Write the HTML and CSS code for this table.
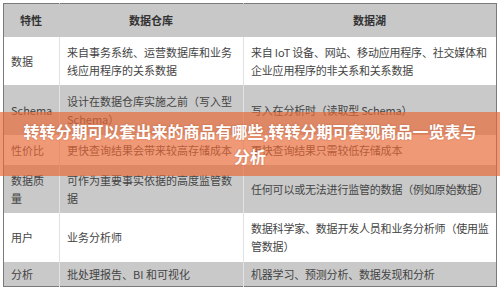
FILE: index.html
```html
<!DOCTYPE html>
<html lang="zh-CN">
<head>
<meta charset="utf-8">
<title>数据仓库 vs 数据湖</title>
<link rel="stylesheet" href="styles.css">
</head>
<body>
<div class="page">
  <table class="cmp">
    <colgroup>
      <col class="c1"><col class="c2"><col class="c3">
    </colgroup>
    <thead>
      <tr class="row-head"><th>特性</th><th>数据仓库</th><th>数据湖</th></tr>
    </thead>
    <tbody>
      <tr class="r-white h48"><td>数据</td><td>来自事务系统、运营数据库和业务线应用程序的关系数据</td><td>来自 IoT 设备、网站、移动应用程序、社交媒体和企业应用程序的非关系和关系数据</td></tr>
      <tr class="r-gray h50"><td>Schema</td><td>设计在数据仓库实施之前（写入型 Schema）</td><td>写入在分析时（读取型 Schema）</td></tr>
      <tr class="r-white h30"><td>性价比</td><td>更快查询结果会带来较高存储成本</td><td>更快查询结果只需较低存储成本</td></tr>
      <tr class="r-gray h48"><td>数据质量</td><td>可作为重要事实依据的高度监管数据</td><td>任何可以或无法进行监管的数据（例如原始数据）</td></tr>
      <tr class="r-white h49"><td>用户</td><td>业务分析师</td><td>数据科学家、数据开发人员和业务分析师（使用监管数据）</td></tr>
      <tr class="r-gray h25"><td>分析</td><td>批处理报告、BI 和可视化</td><td>机器学习、预测分析、数据发现和分析</td></tr>
    </tbody>
  </table>
  <div class="banner">转转分期可以套出来的商品有哪些,转转分期可套现商品一览表与分析</div>
</div>
</body>
</html>
```

FILE: styles.css
```css
html, body {
  margin: 0;
  padding: 0;
  background: #ffffff;
}

.page {
  position: relative;
  width: 500px;
  height: 295px;
  padding: 3px 0 0 3px;
  box-sizing: border-box;
  font-family: "Noto Sans CJK SC", "Noto Sans", sans-serif;
  overflow: hidden;
}

.cmp {
  table-layout: fixed;
  border-collapse: collapse;
  width: 494px;
  border: 1px solid #7a7a7a;
  font-size: 11px;
  line-height: 18px;
  color: #444;
}

.c1 { width: 56px; }
.c2 { width: 184px; }
.c3 { width: 253px; }

.cmp th,
.cmp td {
  padding: 0 8px 0 7px;
  vertical-align: middle;
  border-left: 1px solid #e2e2e2;
  text-align: left;
}

.cmp td:last-child {
  padding-right: 1px;
  letter-spacing: -0.2px;
}

.cmp th:first-child,
.cmp td:first-child {
  border-left: none;
}

.row-head {
  height: 33px;
  background: #c8c8c8;
}

.cmp th {
  text-align: center;
  font-weight: 700;
  color: #333;
  font-size: 11px;
  border-left-color: #c8c8c8;
}

.r-white { background: #ffffff; }
.r-gray { background: #c9c9c9; }

.h48 { height: 48px; }
.h50 { height: 50px; }
.h30 { height: 30px; }
.h49 { height: 49px; }
.h25 { height: 25px; }

.banner {
  position: absolute;
  left: 0;
  top: 112px;
  width: 500px;
  height: 64px;
  box-sizing: border-box;
  padding: 7px 16px 0;
  background: rgba(233, 105, 55, 0.68);
  color: #ffffff;
  font-weight: 700;
  font-size: 16px;
  line-height: 25px;
  text-align: center;
  text-shadow: 0 0 2px rgba(120, 40, 10, 0.35);
}
```
